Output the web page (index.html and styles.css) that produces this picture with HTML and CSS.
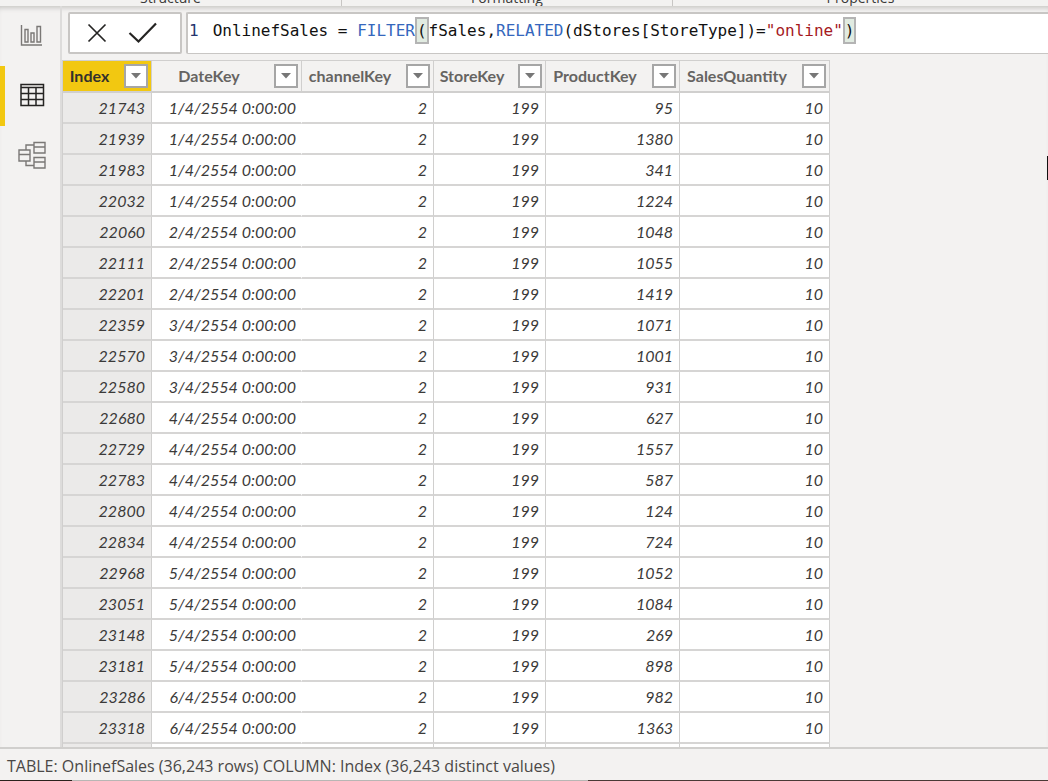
FILE: index.html
```html
<!DOCTYPE html>
<html lang="en">
  <head>
    <meta charset="UTF-8" />
    <meta name="viewport" content="width=device-width, initial-scale=1.0" />
    <title>OnlinefSales</title>
    <link rel="stylesheet" href="styles.css">
  </head>
  <body>
    <header class="ribbon">
      <div class="ribbon-group structure">Structure</div>
      <div class="ribbon-group formatting">Formatting</div>
      <div class="ribbon-group properties">Properties</div>
    </header>

    <div class="workspace">
      <nav class="sidebar">
        <button class="view-btn" aria-label="Report view">
          <svg width="30" height="30" viewBox="0 0 30 30" fill="none" stroke="#7a7876" stroke-width="1.4">
            <path d="M5.5 4v20H26M9 8.500h3v12.500h-3zM15 12h3v9h-3zM21 5.500h3.500v15.500h-3.500z" />
          </svg>
        </button>
        <button class="view-btn active" aria-label="Data view">
          <svg width="30" height="30" viewBox="0 1 30 30" fill="none" stroke="#252423" stroke-width="1.5">
            <path d="M4 4.500h22.500v21h-22.500zM4 7.500h22.500M4 13.500h22.500M4 19.500h22.500M11.500 7.500v18M19 7.500v18" />
          </svg>
        </button>
        <button class="view-btn" aria-label="Model view">
          <svg width="30" height="30" viewBox="-1 1 30 30" fill="none" stroke="#7a7876" stroke-width="1.4">
            <path d="M2 10h11v11h-11zM2 14.500h11M17 2.500h11v10.500h-11zM17 7h11M17 17.500h11v10.500h-11zM17 22h11M9 10v-5h8M9 21v4.500h8" />
          </svg>
        </button>
      </nav>

      <main class="content">
        <div class="formula-row">
          <div class="formula-actions">
            <button class="action-btn" aria-label="Cancel">
              <svg width="20" height="20" viewBox="0 0 20 20" fill="none" stroke="#252423" stroke-width="1.7">
                <path d="M1.500 1.500l17 17M18.500 1.500l-17 17" />
              </svg>
            </button>
            <button class="action-btn" aria-label="Commit">
              <svg width="30" height="22" viewBox="0 0 30 22" fill="none" stroke="#252423" stroke-width="2.2">
                <path d="M1.500 11l9 8.500L28 1.500" />
              </svg>
            </button>
          </div>
          <div class="formula">
            <span class="line-number">1</span>
            <code class="code">OnlinefSales = <span class="fn">FILTER</span><span class="bracket">(</span>fSales,<span class="fn">RELATED</span>(dStores[StoreType])=<span class="str">"online"</span><span class="bracket">)</span></code>
          </div>
        </div>

        <div class="grid">
          <table class="data-table">
            <colgroup>
              <col class="col-index">
              <col class="col-date">
              <col class="col-channel">
              <col class="col-store">
              <col class="col-product">
              <col class="col-quantity">
            </colgroup>
            <thead>
              <tr id="headRow"></tr>
            </thead>
            <tbody id="rows"></tbody>
          </table>
        </div>
      </main>
    </div>

    <footer class="status">TABLE: OnlinefSales (36,243 rows) COLUMN: Index (36,243 distinct values)</footer>
    <div class="bottom-edge"></div>
    <div class="edge-mark"></div>

    <script src="script.js"></script>
  </body>
</html>
```
FILE: styles.css
```css
* {
  margin: 0;
  padding: 0;
  box-sizing: border-box;
}

body {
  display: flex;
  flex-direction: column;
  height: 100vh;
  overflow: hidden;
  position: relative;
  background: #f3f2f1;
  color: #3b3a39;
  font-family: "Open Sans", sans-serif;
}

button {
  border: none;
  background: none;
  cursor: pointer;
}

svg {
  display: block;
}

/* ribbon, scrolled up so only the foot of the group labels shows */
.ribbon {
  display: flex;
  align-items: flex-end;
  flex-shrink: 0;
  height: 6px;
  overflow: hidden;
}

.ribbon-group {
  font-size: 14px;
  line-height: 16px;
  text-align: center;
  border-right: 1px solid #c8c6c4;
}

.structure {
  flex: 0 0 342px;
}

.formatting {
  flex: 0 0 331px;
}

.properties {
  flex: 1;
  border-right: none;
}

.workspace {
  display: flex;
  flex: 1;
  min-height: 0;
  box-shadow: inset 0 5px 5px -3px #c8c6c4;
}

/* sidebar */
.sidebar {
  flex: 0 0 62px;
  border-right: 2px solid #dddcdb;
}

.view-btn {
  display: flex;
  align-items: center;
  width: 100%;
  height: 60px;
  padding-left: 16px;
}

.view-btn.active {
  border-left: 5px solid #f2c811;
  padding-left: 12px;
}

.content {
  display: flex;
  flex-direction: column;
  flex: 1;
  min-width: 0;
}

/* formula bar */
.formula-row {
  display: flex;
  gap: 4px;
  padding: 6px 0 6px 6px;
}

.formula-actions {
  display: flex;
  align-items: center;
  gap: 21px;
  flex: 0 0 114px;
  height: 42px;
  padding-left: 17px;
  background: #fff;
  border: 2px solid #c8c6c4;
  border-radius: 2px;
}

.formula {
  display: flex;
  gap: 14px;
  flex: 1;
  min-width: 0;
  height: 42px;
  padding: 5px 0 0 1px;
  background: #fff;
  border: 2px solid #c8c6c4;
  border-right: none;
  border-bottom-width: 1px;
  border-radius: 2px 0 0 2px;
  font-family: "DejaVu Sans Mono", monospace;
  font-size: 16px;
  line-height: 24px;
  white-space: nowrap;
}

.line-number {
  color: #24356e;
}

.code {
  font-family: inherit;
  color: #111;
}

.fn {
  color: #3567bd;
}

.str {
  color: #a5191e;
}

.bracket {
  padding: 2px 0;
  border: 2px solid #b4b4b4;
  background: #e1ebe1;
}

/* data grid */
.grid {
  flex: 1;
  min-height: 0;
  overflow: hidden;
}

.data-table {
  table-layout: fixed;
  width: 768px;
  border-left: 1px solid #d0cfce;
  border-collapse: separate;
  border-spacing: 0;
  font-family: Lato, sans-serif;
  font-size: 16px;
}

.col-index {
  width: 89px;
}

.col-date,
.col-quantity {
  width: 150px;
}

.col-channel {
  width: 132px;
}

.col-store {
  width: 112px;
}

.col-product {
  width: 134px;
}

.data-table th {
  height: 33px;
  border: 1px solid #d0cfce;
  border-bottom-width: 2px;
  border-left: none;
  color: #666462;
}

.data-table th:first-child {
  background: #f2c811;
  color: #33312c;
}

.head-cell {
  display: flex;
  align-items: center;
  padding-right: 3px;
}

.head-label {
  flex: 1;
  padding: 0 8px 2px 0;
  text-align: center;
}

.filter-btn {
  display: flex;
  align-items: center;
  justify-content: center;
  width: 24px;
  height: 24px;
  background: #fff;
  border: 2px solid #a6a6a6;
}

.data-table td {
  height: 31px;
  padding-right: 6px;
  background: #fff;
  border-right: 1px solid #d0cfce;
  border-bottom: 2px solid #d6d5d4;
  font-style: italic;
  line-height: 20px;
  text-align: right;
}

.data-table td:first-child {
  background: #ebeae9;
}

.data-table td:nth-child(2) {
  padding-right: 5px;
  border-right-color: #fff;
}

/* status bar */
.status {
  flex-shrink: 0;
  height: 33px;
  padding-left: 7px;
  border-top: 2px solid #d0cfcd;
  font-size: 16px;
  line-height: 34px;
  color: #4a4846;
  white-space: nowrap;
}

.bottom-edge {
  flex-shrink: 0;
  height: 1px;
  background: linear-gradient(to right, #2b211c 72px, #b8b6b4 72px, #b8b6b4 588px, #4a3935 588px);
}

.edge-mark {
  position: absolute;
  top: 156px;
  right: 0;
  width: 1px;
  height: 24px;
  background: #111;
}
```
FILE: script.js
```js
const columns = ["Index", "DateKey", "channelKey", "StoreKey", "ProductKey", "SalesQuantity"];

// index, day, product
const sales = [
  [21743, 1, 95],
  [21939, 1, 1380],
  [21983, 1, 341],
  [22032, 1, 1224],
  [22060, 2, 1048],
  [22111, 2, 1055],
  [22201, 2, 1419],
  [22359, 3, 1071],
  [22570, 3, 1001],
  [22580, 3, 931],
  [22680, 4, 627],
  [22729, 4, 1557],
  [22783, 4, 587],
  [22800, 4, 124],
  [22834, 4, 724],
  [22968, 5, 1052],
  [23051, 5, 1084],
  [23148, 5, 269],
  [23181, 5, 898],
  [23286, 6, 982],
  [23318, 6, 1363],
];

document.getElementById("headRow").innerHTML = columns
  .map(
    (name) => `<th scope="col"><div class="head-cell"><span class="head-label">${name}</span>
      <button class="filter-btn" aria-label="Filter ${name}">
        <svg width="10" height="6" viewBox="0 0 10 6"><path d="M0 0h10L5 5.500z" fill="#777"/></svg>
      </button></div></th>`
  )
  .join("");

const rows = sales.map(([index, day, product]) => [index, `${day}/4/2554 0:00:00`, 2, 199, product, 10]);

// the next row is only just in view
rows.push(["", "", "", "", "", ""]);

document.getElementById("rows").innerHTML = rows
  .map((row) => `<tr>${row.map((cell) => `<td>${cell}</td>`).join("")}</tr>`)
  .join("");
```
